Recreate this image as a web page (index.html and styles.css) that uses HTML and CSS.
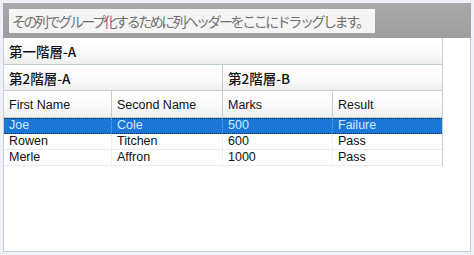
FILE: index.html
```html
<!DOCTYPE html>
<html lang="ja">
<head>
<meta charset="utf-8">
<link rel="stylesheet" href="styles.css">
</head>
<body>
<div class="frame">
  <div class="group-panel">
    <div class="group-hint">その列でグループ化するために列ヘッダーをここにドラッグします。</div>
  </div>
  <div class="grid">
    <div class="hdr span4 h1">第一階層-A</div>
    <div class="hdr span2 h2">第2階層-A</div>
    <div class="hdr span2 h2 last">第2階層-B</div>
    <div class="hdr col">First Name</div>
    <div class="hdr col">Second Name</div>
    <div class="hdr col">Marks</div>
    <div class="hdr col last">Result</div>

    <div class="cell sel">Joe</div>
    <div class="cell sel">Cole</div>
    <div class="cell sel">500</div>
    <div class="cell sel last">Failure</div>

    <div class="cell">Rowen</div>
    <div class="cell">Titchen</div>
    <div class="cell">600</div>
    <div class="cell last">Pass</div>

    <div class="cell">Merle</div>
    <div class="cell">Affron</div>
    <div class="cell">1000</div>
    <div class="cell last">Pass</div>
  </div>
</div>
</body>
</html>
```

FILE: styles.css
```css
html, body {
  margin: 0;
  padding: 0;
}
body {
  width: 474px;
  height: 255px;
  background: #eef1f6;
  font-family: "Liberation Sans", Arial, "Noto Sans CJK JP", sans-serif;
  padding: 3px 3px 0 3px;
  box-sizing: border-box;
}
.frame {
  width: 468px;
  height: 249px;
  box-sizing: border-box;
  background: #ffffff;
  border: 1px solid #c9cdd3;
  border-top: none;
}
.group-panel {
  height: 35px;
  box-sizing: border-box;
  background: linear-gradient(#a9a9a9, #9e9e9e);
  padding: 6px 0 0 6px;
  margin: 0 -1px;
}
.group-hint {
  width: 366px;
  height: 24px;
  box-sizing: border-box;
  background: #f5f5f5;
  color: #6f6f6f;
  font-family: "Noto Sans CJK JP", sans-serif;
  font-size: 14px;
  line-height: 24px;
  padding-left: 3px;
  letter-spacing: -2.45px;
  white-space: nowrap;
  overflow: hidden;
}
.grid {
  display: grid;
  grid-template-columns: 108px 111px 110px 109px;
  grid-template-rows: 27px 26px 27px 16px 16px 16px;
  width: 438px;
  border-right: 1px solid #c3cfcf;
}
.hdr {
  box-sizing: border-box;
  background: linear-gradient(#ffffff 0%, #fafafa 60%, #eeeeee 100%);
  border-bottom: 1px solid #c2cfcf;
  border-right: 1px solid #c2cfcf;
  color: #111;
  display: flex;
  align-items: center;
  padding-left: 5px;
  font-size: 12px;
}
.span4 { grid-column: span 4; }
.span2 { grid-column: span 2; }
.h1, .h2 {
  font-family: "Noto Sans CJK JP", sans-serif;
  font-size: 13.5px;
  font-weight: 500;
  letter-spacing: 0;
}
.col {
  font-size: 12.5px;
  padding-top: 1px;
}
.hdr.last, .span4 { border-right: none; }
.cell {
  box-sizing: border-box;
  font-size: 12.5px;
  line-height: 15px;
  padding-left: 5px;
  color: #111;
  border-right: 1px dotted #e4e4e4;
  border-bottom: 1px solid #ececec;
}
.cell.last { border-right: none; }
.cell.sel {
  background: #1b77d6;
  color: #d4e9ff;
  border-top: 1px dotted #1a2a40;
  border-bottom: 1px dotted #1a2a40;
  border-right: 1px dotted #6aaaf0;
  line-height: 13px;
}
.cell.sel.last { border-right: none; }
```
